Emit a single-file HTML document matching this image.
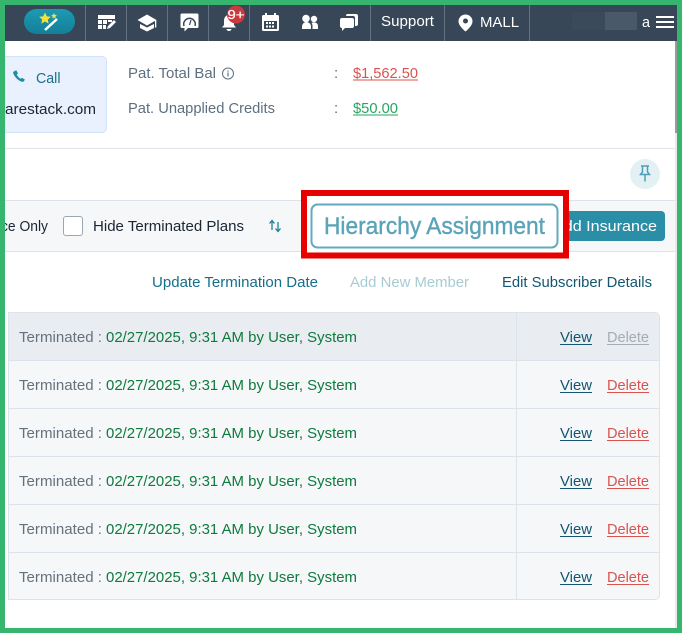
<!DOCTYPE html>
<html><head><meta charset="utf-8"><style>
html,body{margin:0;padding:0;width:682px;height:633px;overflow:hidden;background:#fff}
svg{display:block}
text{font-family:"Liberation Sans",sans-serif;font-size:15px}
</style></head><body>
<svg width="682" height="633" viewBox="0 0 682 633" xmlns="http://www.w3.org/2000/svg">
<defs><linearGradient id="pill" x1="0" y1="0" x2="0" y2="1"><stop offset="0" stop-color="#1d9ab5"/><stop offset="1" stop-color="#147f97"/></linearGradient></defs>
<rect width="682" height="633" fill="#fff"/>
<!-- header -->
<rect x="0" y="5" width="682" height="36" fill="#374757"/>
<g stroke="#64727f" stroke-width="1"><path d="M85.500 5V41M126.500 5V41M167.500 5V41M208.500 5V41M249.500 5V41M370.500 5V41M444.500 5V41M529.500 5V41"/></g>
<rect x="24" y="9" width="51" height="25" rx="12.500" fill="url(#pill)"/>
<path d="M45 12.500l1.800 3.900 4 .4-3 2.800.9 4-3.700-2.100-3.700 2.100.9-4-3-2.800 4-.4z" fill="#f6e33a"/>
<path d="M54 13l.9 1.900 2 .2-1.500 1.400.4 2-1.800-1-1.800 1 .4-2-1.500-1.400 2-.2z" fill="#f6e33a"/>
<path d="M45 30L57 19" stroke="#fff" stroke-width="2.500"/>
<!-- list icon -->
<g fill="#fff"><rect x="98" y="15" width="17" height="4"/><rect x="98" y="20" width="4" height="4"/><rect x="103" y="20" width="4" height="4"/><rect x="108" y="20" width="4" height="2"/><rect x="98" y="25" width="4" height="4"/><rect x="103" y="25" width="3" height="4"/></g>
<path d="M107 29l1-3 6-6 2 2-6 6z" fill="#fff"/>
<!-- cap -->
<path d="M147 14.500l9.500 5.500-9.500 5.500-9.500-5.500z" fill="#fff"/><path d="M140 24v4l7 3.500 7-3.500v-4l-7 3.500z" fill="#fff"/><rect x="155" y="20" width="1.300" height="7.500" fill="#fff"/>
<!-- gauge -->
<path d="M182 13.500h15a1.500 1.500 0 0 1 1.500 1.500v11.500a1.500 1.500 0 0 1-1.500 1.500h-9l-3.500 3.500v-3.500h-2.500a1.500 1.500 0 0 1-1.500-1.500V15a1.500 1.500 0 0 1 1.500-1.500z" fill="#fff"/>
<path d="M184 26a5.800 5.800 0 1 1 11 0" fill="none" stroke="#374757" stroke-width="1.500"/><path d="M189.500 25l1.500-5" stroke="#374757" stroke-width="1.200"/>
<!-- bell -->
<path d="M229 15c-3.500 0-5 3-5 6v4l-2 2.500h14l-2-2.500v-4c0-3-1.500-6-5-6z" fill="#fff"/><path d="M226.500 29a2.500 2 0 0 0 5 0z" fill="#fff"/>
<circle cx="236" cy="14.500" r="9" fill="#c9393f"/>
<text x="227.500" y="19" fill="#fff" stroke="#fff" stroke-width=".2" textLength="17" lengthAdjust="spacingAndGlyphs" style="font-size:13px">9+</text>
<!-- calendar -->
<rect x="262" y="15" width="17" height="16" rx="1.500" fill="#fff"/><rect x="265" y="13" width="2" height="4" fill="#fff"/><rect x="274" y="13" width="2" height="4" fill="#fff"/>
<rect x="264" y="21" width="13" height="8" fill="#374757"/>
<g fill="#fff"><rect x="266" y="22" width="2" height="2"/><rect x="269" y="22" width="2" height="2"/><rect x="272" y="22" width="2" height="2"/><rect x="266" y="25.500" width="2" height="2"/><rect x="269" y="25.500" width="2" height="2"/><rect x="272" y="25.500" width="2" height="2"/></g>
<!-- users -->
<circle cx="306" cy="18.500" r="3.800" fill="#fff"/><circle cx="314" cy="19" r="3.200" fill="#fff"/>
<path d="M302 29v-2.500c0-2.500 2-4.500 4.500-4.500s4.500 2 4.500 4.500V29z" fill="#fff"/><path d="M312.500 29v-3c0-1.300-.4-2.300-1-3 .8-.4 1.600-.6 2.500-.6 2.300 0 4 1.500 4 3.600v3z" fill="#fff"/>
<!-- chat -->
<path d="M347 14h9a2 2 0 0 1 2 2v8a2 2 0 0 1-2 2h-1V18a2 2 0 0 0-2-2h-7a2 2 0 0 1 1-2z" fill="#fff"/>
<path d="M344 18h8a2 2 0 0 1 2 2v6a2 2 0 0 1-2 2h-7l-3 3v-3a2 2 0 0 1-2-2v-6a2 2 0 0 1 2-2z" fill="#fff"/>
<text x="381" y="26" fill="#fff" textLength="53" lengthAdjust="spacingAndGlyphs">Support</text>
<path d="M465.500 14.500a7 7 0 0 0-7 7c0 4.500 7 10 7 10s7-5.500 7-10a7 7 0 0 0-7-7z" fill="#fff"/><circle cx="465.500" cy="21" r="2.500" fill="#374757"/>
<text x="480" y="27" fill="#fff" textLength="39" lengthAdjust="spacingAndGlyphs">MALL</text>
<rect x="605" y="12" width="32" height="18" fill="#4a5967"/><rect x="572" y="12" width="33" height="18" fill="#3a4a5a"/>
<text x="642" y="27" fill="#fff" textLength="8" lengthAdjust="spacingAndGlyphs">a</text>
<g fill="#fff"><rect x="656" y="16" width="18" height="2"/><rect x="656" y="21" width="18" height="2"/><rect x="656" y="26" width="18" height="2"/></g>
<!-- contact card -->
<path d="M5 56.500H102a4.500 4.500 0 0 1 4.500 4.500v67a4.500 4.500 0 0 1-4.500 4.500H5z" fill="#e8f1fd" stroke="#d2e2f8"/>
<path d="M13 72c.5 4 5 9 10 10l2-2.200-3-2-1.300 1c-1.600-.8-3.400-2.800-4-4.300l1.300-1.200-1.800-3z" fill="#1a8da8"/>
<text x="36" y="83" fill="#1c6f89" textLength="24.500" lengthAdjust="spacingAndGlyphs">Call</text>
<text x="5" y="114" fill="#1a2633" textLength="91" lengthAdjust="spacingAndGlyphs">arestack.com</text>
<text x="128" y="78" fill="#5d6f80" textLength="88" lengthAdjust="spacingAndGlyphs">Pat. Total Bal</text>
<circle cx="228" cy="73.500" r="5.500" fill="none" stroke="#5d6f80"/><rect x="227.400" y="72.500" width="1.200" height="4" fill="#5d6f80"/><rect x="227.400" y="70.500" width="1.200" height="1.200" fill="#5d6f80"/>
<text x="128" y="113" fill="#5d6f80" textLength="147" lengthAdjust="spacingAndGlyphs">Pat. Unapplied Credits</text>
<text x="334" y="78" fill="#5d6f80">:</text><text x="334" y="113" fill="#5d6f80">:</text>
<text x="353" y="78" fill="#d9534f" textLength="65" lengthAdjust="spacingAndGlyphs">$1,562.50</text><rect x="353" y="79.500" width="65" height="1" fill="#d9534f"/>
<text x="353" y="113" fill="#27a561" textLength="45" lengthAdjust="spacingAndGlyphs">$50.00</text><rect x="353" y="114.500" width="45" height="1" fill="#27a561"/>
<rect x="5" y="148" width="670" height="1" fill="#dfe4ea"/>
<!-- pin -->
<circle cx="645" cy="174" r="15" fill="#e3f1f5"/>
<path d="M641 166h8M642.500 166v6l-2 2.500h9l-2-2.500v-6M645 174.500v7" fill="none" stroke="#4f9fb6" stroke-width="1.500"/>
<!-- toolbar -->
<rect x="5" y="200" width="670" height="51" fill="#f5f7f9"/>
<rect x="5" y="200" width="670" height="1" fill="#dde3ea"/><rect x="5" y="251" width="670" height="1" fill="#dde3ea"/>
<text x="1" y="231" fill="#1a2633" textLength="47" lengthAdjust="spacingAndGlyphs">ce Only</text>
<rect x="63.500" y="216.500" width="19" height="19" rx="2.500" fill="#fff" stroke="#9aa7b3"/>
<text x="93" y="231" fill="#1a2633" textLength="151" lengthAdjust="spacingAndGlyphs">Hide Terminated Plans</text>
<path d="M272 230v-9M269.500 223.500l2.500-3 2.500 3M278 222v9M275.500 228.500l2.500 3 2.500-3" fill="none" stroke="#1f7f97" stroke-width="1.300"/>
<rect x="560" y="211" width="105" height="30" rx="4" fill="#2a8ea6"/>
<text x="553" y="231" fill="#fff" textLength="104" lengthAdjust="spacingAndGlyphs">Add Insurance</text>
<!-- highlight -->
<rect x="304" y="193" width="262" height="62.500" fill="#fff" stroke="#e60000" stroke-width="6"/>
<rect x="311.500" y="204.500" width="246" height="43" rx="6" fill="#fff" stroke="#62abbd" stroke-width="2"/>
<text x="324" y="234" fill="#5ba4b8" stroke="#5ba4b8" stroke-width=".4" textLength="221" lengthAdjust="spacingAndGlyphs" style="font-size:24px">Hierarchy Assignment</text>
<!-- actions -->
<text x="152" y="287" fill="#146f8a" textLength="166" lengthAdjust="spacingAndGlyphs">Update Termination Date</text>
<text x="350" y="287" fill="#a9cbd4" textLength="119" lengthAdjust="spacingAndGlyphs">Add New Member</text>
<text x="502" y="287" fill="#12566f" textLength="150" lengthAdjust="spacingAndGlyphs">Edit Subscriber Details</text>
<!-- table -->
<path d="M8.500 312.500H655a4.500 4.500 0 0 1 4.500 4.500v278a4.500 4.500 0 0 1-4.500 4.500H8.500z" fill="#f5f7f9" stroke="#dde3ea"/>
<path d="M9 313H655a4 4 0 0 1 4 4V360H9z" fill="#e9edf1"/>
<g fill="#dde3ea"><rect x="8" y="360" width="652" height="1"/><rect x="8" y="408" width="652" height="1"/><rect x="8" y="456" width="652" height="1"/><rect x="8" y="504" width="652" height="1"/><rect x="8" y="552" width="652" height="1"/><rect x="516" y="312" width="1" height="288"/></g>

<text x="19" y="342" fill="#66717d" textLength="83" lengthAdjust="spacingAndGlyphs">Terminated :</text><text x="106" y="342" fill="#0f7a3d" textLength="251" lengthAdjust="spacingAndGlyphs">02/27/2025, 9:31 AM by User, System</text>
<text x="560" y="342" fill="#12566f" textLength="32" lengthAdjust="spacingAndGlyphs">View</text><rect x="560" y="344" width="32" height="1" fill="#12566f"/>
<text x="607" y="342" fill="#a3abb3" textLength="42" lengthAdjust="spacingAndGlyphs">Delete</text><rect x="607" y="344" width="42" height="1" fill="#a3abb3"/>

<text x="19" y="390" fill="#66717d" textLength="83" lengthAdjust="spacingAndGlyphs">Terminated :</text><text x="106" y="390" fill="#0f7a3d" textLength="251" lengthAdjust="spacingAndGlyphs">02/27/2025, 9:31 AM by User, System</text>
<text x="560" y="390" fill="#12566f" textLength="32" lengthAdjust="spacingAndGlyphs">View</text><rect x="560" y="392" width="32" height="1" fill="#12566f"/>
<text x="607" y="390" fill="#d9534f" textLength="42" lengthAdjust="spacingAndGlyphs">Delete</text><rect x="607" y="392" width="42" height="1" fill="#d9534f"/>

<text x="19" y="438" fill="#66717d" textLength="83" lengthAdjust="spacingAndGlyphs">Terminated :</text><text x="106" y="438" fill="#0f7a3d" textLength="251" lengthAdjust="spacingAndGlyphs">02/27/2025, 9:31 AM by User, System</text>
<text x="560" y="438" fill="#12566f" textLength="32" lengthAdjust="spacingAndGlyphs">View</text><rect x="560" y="440" width="32" height="1" fill="#12566f"/>
<text x="607" y="438" fill="#d9534f" textLength="42" lengthAdjust="spacingAndGlyphs">Delete</text><rect x="607" y="440" width="42" height="1" fill="#d9534f"/>

<text x="19" y="486" fill="#66717d" textLength="83" lengthAdjust="spacingAndGlyphs">Terminated :</text><text x="106" y="486" fill="#0f7a3d" textLength="251" lengthAdjust="spacingAndGlyphs">02/27/2025, 9:31 AM by User, System</text>
<text x="560" y="486" fill="#12566f" textLength="32" lengthAdjust="spacingAndGlyphs">View</text><rect x="560" y="488" width="32" height="1" fill="#12566f"/>
<text x="607" y="486" fill="#d9534f" textLength="42" lengthAdjust="spacingAndGlyphs">Delete</text><rect x="607" y="488" width="42" height="1" fill="#d9534f"/>

<text x="19" y="534" fill="#66717d" textLength="83" lengthAdjust="spacingAndGlyphs">Terminated :</text><text x="106" y="534" fill="#0f7a3d" textLength="251" lengthAdjust="spacingAndGlyphs">02/27/2025, 9:31 AM by User, System</text>
<text x="560" y="534" fill="#12566f" textLength="32" lengthAdjust="spacingAndGlyphs">View</text><rect x="560" y="536" width="32" height="1" fill="#12566f"/>
<text x="607" y="534" fill="#d9534f" textLength="42" lengthAdjust="spacingAndGlyphs">Delete</text><rect x="607" y="536" width="42" height="1" fill="#d9534f"/>

<text x="19" y="582" fill="#66717d" textLength="83" lengthAdjust="spacingAndGlyphs">Terminated :</text><text x="106" y="582" fill="#0f7a3d" textLength="251" lengthAdjust="spacingAndGlyphs">02/27/2025, 9:31 AM by User, System</text>
<text x="560" y="582" fill="#12566f" textLength="32" lengthAdjust="spacingAndGlyphs">View</text><rect x="560" y="584" width="32" height="1" fill="#12566f"/>
<text x="607" y="582" fill="#d9534f" textLength="42" lengthAdjust="spacingAndGlyphs">Delete</text><rect x="607" y="584" width="42" height="1" fill="#d9534f"/>

<!-- scrollbar -->
<rect x="675" y="41" width="2" height="587" fill="#e8e9ea"/><rect x="675" y="41" width="2" height="92" fill="#9a9a9a"/>
<!-- green frame -->
<g fill="#36b56f"><rect x="0" y="0" width="682" height="5"/><rect x="0" y="628" width="682" height="5"/><rect x="0" y="0" width="5" height="633"/><rect x="677" y="0" width="5" height="633"/></g>
</svg>
</body></html>
